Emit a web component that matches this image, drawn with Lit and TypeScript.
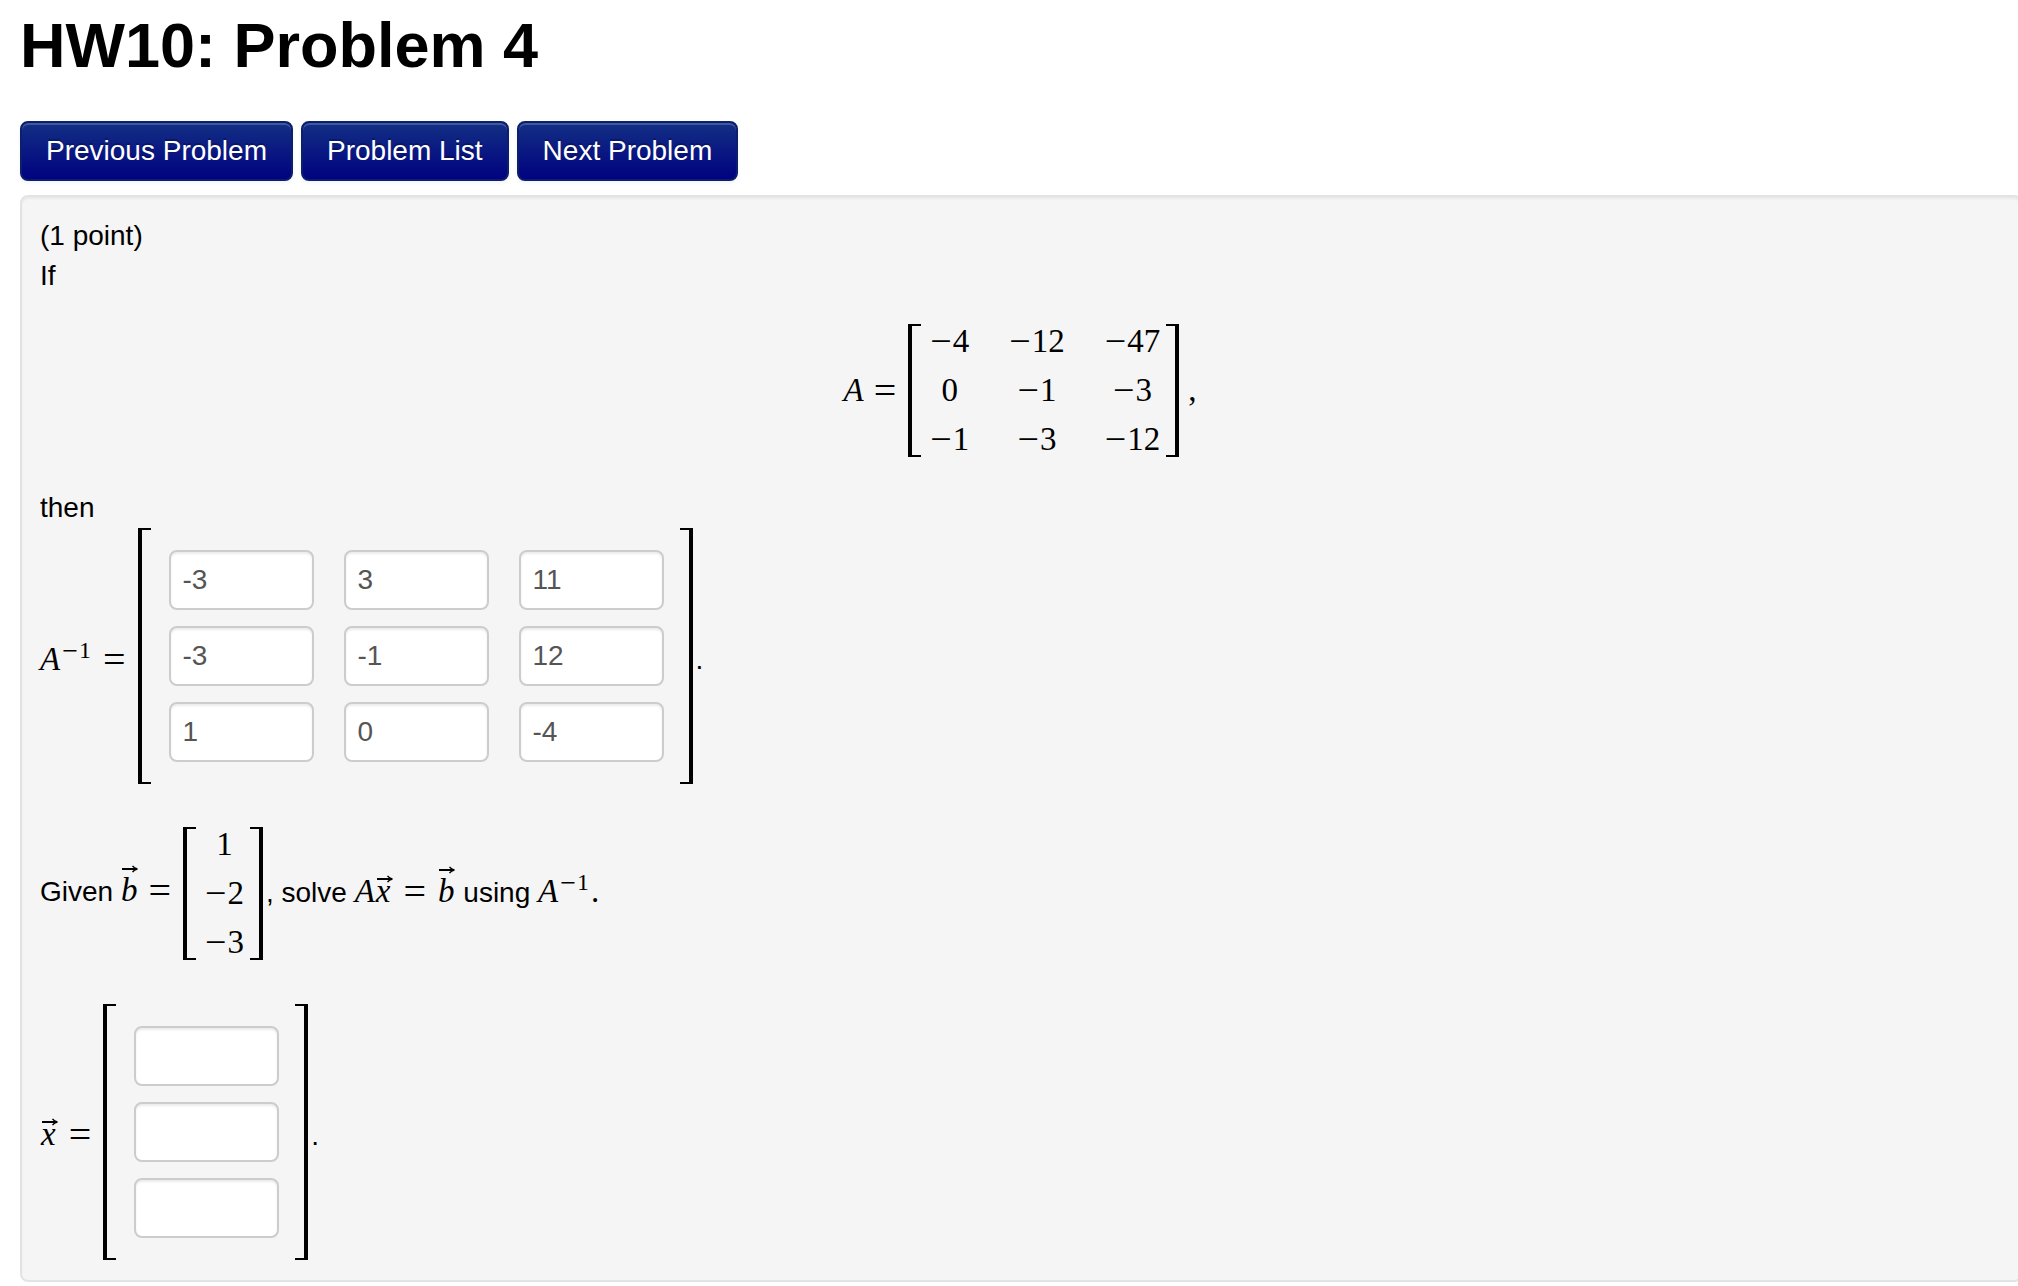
import { LitElement, html, css } from "lit";
import { customElement, property } from "lit/decorators.js";
import { classMap } from "lit/directives/class-map.js";

const mathStyles = css`
  .num,
  .var,
  .op,
  .minus,
  sup {
    font-family: "Liberation Serif", "Times New Roman", serif;
  }
  .num,
  .var {
    font-size: 33px;
  }
  .var {
    font-style: italic;
  }
  .op {
    font-size: 40px;
    line-height: 0;
    vertical-align: -3px;
    margin: 0 12px 0 10px;
  }
  .minus {
    font-size: 38px;
    line-height: 0;
    vertical-align: -2px;
    margin-right: 1px;
  }
  sup {
    font-size: 24px;
    line-height: 0;
    vertical-align: 12px;
    margin: 0 2px;
  }
  sup .minus {
    font-size: 28px;
  }
`;

const signed = (n: number) =>
  n < 0 ? html`<span class="minus">−</span>${-n}` : html`${n}`;

/** Wraps its content in a pair of tall square brackets. */
@customElement("square-brackets")
export class SquareBrackets extends LitElement {
  static styles = css`
    :host {
      display: flex;
      align-items: stretch;
    }
    .edge {
      box-sizing: border-box;
      width: 13px;
      border: solid #000;
      border-width: 2px 0 2px 4px;
    }
    .right {
      border-width: 2px 4px 2px 0;
    }
  `;
  render() {
    return html`<span class="edge"></span><slot></slot
      ><span class="edge right"></span>`;
  }
}

/** A matrix of integers. */
@customElement("number-matrix")
export class NumberMatrix extends LitElement {
  @property({ attribute: false }) rows: number[][] = [];
  static styles = [
    mathStyles,
    css`
      :host {
        display: block;
      }
      table {
        border-collapse: collapse;
        margin: 0 6px 0 9px;
      }
      td {
        padding: 0 0 14px 40px;
        height: 35px;
        line-height: 35px;
        text-align: center;
        white-space: nowrap;
      }
      td:first-child {
        padding-left: 0;
      }
      tr:last-child td {
        padding-bottom: 0;
      }
    `,
  ];
  render() {
    return html`<square-brackets>
      <table>
        ${this.rows.map(
          (row) =>
            html`<tr>
              ${row.map((n) => html`<td class="num">${signed(n)}</td>`)}
            </tr>`
        )}
      </table>
    </square-brackets>`;
  }
}

/** A matrix of answer boxes. */
@customElement("answer-matrix")
export class AnswerMatrix extends LitElement {
  @property({ attribute: false }) rows: string[][] = [];
  @property() name = "";
  static styles = css`
    :host {
      display: block;
    }
    .grid {
      display: flex;
      flex-direction: column;
      gap: 16px;
      padding: 22px 16px 22px 18px;
    }
    .row {
      display: flex;
      gap: 30px;
    }
    input {
      box-sizing: border-box;
      width: 145px;
      height: 60px;
      margin: 0;
      padding: 8px 12px;
      border: 2px solid #ccc;
      border-radius: 8px;
      background: #fff;
      box-shadow: inset 0 2px 2px rgba(0, 0, 0, 0.075);
      color: #555;
      font: 28px/40px "Liberation Sans", Arial, sans-serif;
    }
    input:focus {
      outline: none;
      border-color: #52a8ec;
    }
  `;
  render() {
    return html`<square-brackets>
      <div class="grid">
        ${this.rows.map(
          (row, r) =>
            html`<div class="row">
              ${row.map(
                (v, c) =>
                  html`<input
                    type="text"
                    aria-label="${this.name} row ${r + 1} column ${c + 1}"
                    .value=${v}
                  />`
              )}
            </div>`
        )}
      </div>
    </square-brackets>`;
  }
}

@customElement("app-root")
export class AppRoot extends LitElement {
  static styles = [
    mathStyles,
    css`
      :host {
        display: block;
        overflow: hidden;
        background: #fff;
        color: #000;
        font: 28px/40px "Liberation Sans", Arial, sans-serif;
      }
      .page {
        padding: 5px 0 2px 20px;
      }
      h1 {
        margin: 0;
        font-size: 63px;
        line-height: 80px;
        font-weight: 700;
      }
      nav {
        display: flex;
        gap: 8px;
        margin: 36px 0 14px;
      }
      nav a {
        padding: 8px 24px;
        border: 2px solid #0a1f6e;
        border-radius: 8px;
        background: linear-gradient(#133184, #000080) border-box;
        box-shadow: inset 0 2px 0 rgba(255, 255, 255, 0.2),
          0 2px 4px rgba(0, 0, 0, 0.05);
        color: #fff;
        text-decoration: none;
        text-shadow: 0 -2px 0 rgba(0, 0, 0, 0.25);
        white-space: nowrap;
      }
      .problem {
        margin-right: -4px;
        padding: 19px 20px 20px 18px;
        border: 2px solid #e3e3e3;
        border-radius: 8px;
        background: #f5f5f5;
        box-shadow: inset 0 2px 2px rgba(0, 0, 0, 0.05);
      }
      .line {
        display: flex;
        align-items: center;
      }
      .display {
        justify-content: center;
        margin: 28px 0 31px;
      }
      .inverse {
        margin-bottom: 43px;
      }
      .given {
        margin-bottom: 44px;
      }
      .run {
        white-space: nowrap;
      }
      .given .run {
        padding-bottom: 3px;
      }
      .answer .run {
        padding-top: 8px;
      }
      .comma {
        margin-left: 9px;
      }
      .stop {
        margin-left: 3px;
      }
      .vec {
        position: relative;
        display: inline-block;
        line-height: 35px;
        padding: 0 3px 0 1px;
      }
      .vec.tall {
        padding: 0 1px 0 0;
      }
      .vec svg {
        position: absolute;
        left: 2px;
        top: 1px;
      }
      .vec.tall svg {
        left: 1px;
        top: -8px;
      }
    `,
  ];

  private vec(letter: string, tall = false) {
    return html`<span class=${classMap({ var: true, vec: true, tall })}
      >${letter}<svg width="16" height="8" viewBox="0 0 16 8" aria-hidden="true">
        <path d="M0 4H14" stroke="#000" stroke-width="2" fill="none" />
        <path
          d="M10.5 0.8C11.6 2.4 13 3.4 15.4 4C13 4.6 11.6 5.6 10.5 7.2"
          stroke="#000"
          stroke-width="1.4"
          fill="none"
        /></svg
    ></span>`;
  }

  render() {
    const eq = html`<span class="op">=</span>`;
    const A = html`<span class="var">A</span>`;
    const inverse = html`${A}<sup><span class="minus">−</span>1</sup>`;
    return html`<main class="page">
      <h1>HW10: Problem 4</h1>
      <nav>
        <a href="#previous">Previous Problem</a>
        <a href="#list">Problem List</a>
        <a href="#next">Next Problem</a>
      </nav>
      <section class="problem">
        <div>(1 point)</div>
        <div>If</div>
        <div class="line display">
          <span class="run">${A}${eq}</span>
          <number-matrix
            .rows=${[
              [-4, -12, -47],
              [0, -1, -3],
              [-1, -3, -12],
            ]}
          ></number-matrix>
          <span class="run comma"><span class="num">,</span></span>
        </div>
        <div>then</div>
        <div class="line answer inverse">
          <span class="run">${inverse}${eq}</span>
          <answer-matrix
            name="A inverse"
            .rows=${[
              ["-3", "3", "11"],
              ["-3", "-1", "12"],
              ["1", "0", "-4"],
            ]}
          ></answer-matrix>
          <span class="run stop">.</span>
        </div>
        <div class="line given">
          <span class="run">Given ${this.vec("b", true)}${eq}</span>
          <number-matrix .rows=${[[1], [-2], [-3]]}></number-matrix>
          <span class="run stop"
            >, solve
            ${A}${this.vec("x")}${eq}${this.vec("b", true)}
            using ${inverse}<span class="num">.</span></span
          >
        </div>
        <div class="line answer">
          <span class="run">${this.vec("x")}${eq}</span>
          <answer-matrix name="x" .rows=${[[""], [""], [""]]}></answer-matrix>
          <span class="run stop">.</span>
        </div>
      </section>
    </main>`;
  }
}
